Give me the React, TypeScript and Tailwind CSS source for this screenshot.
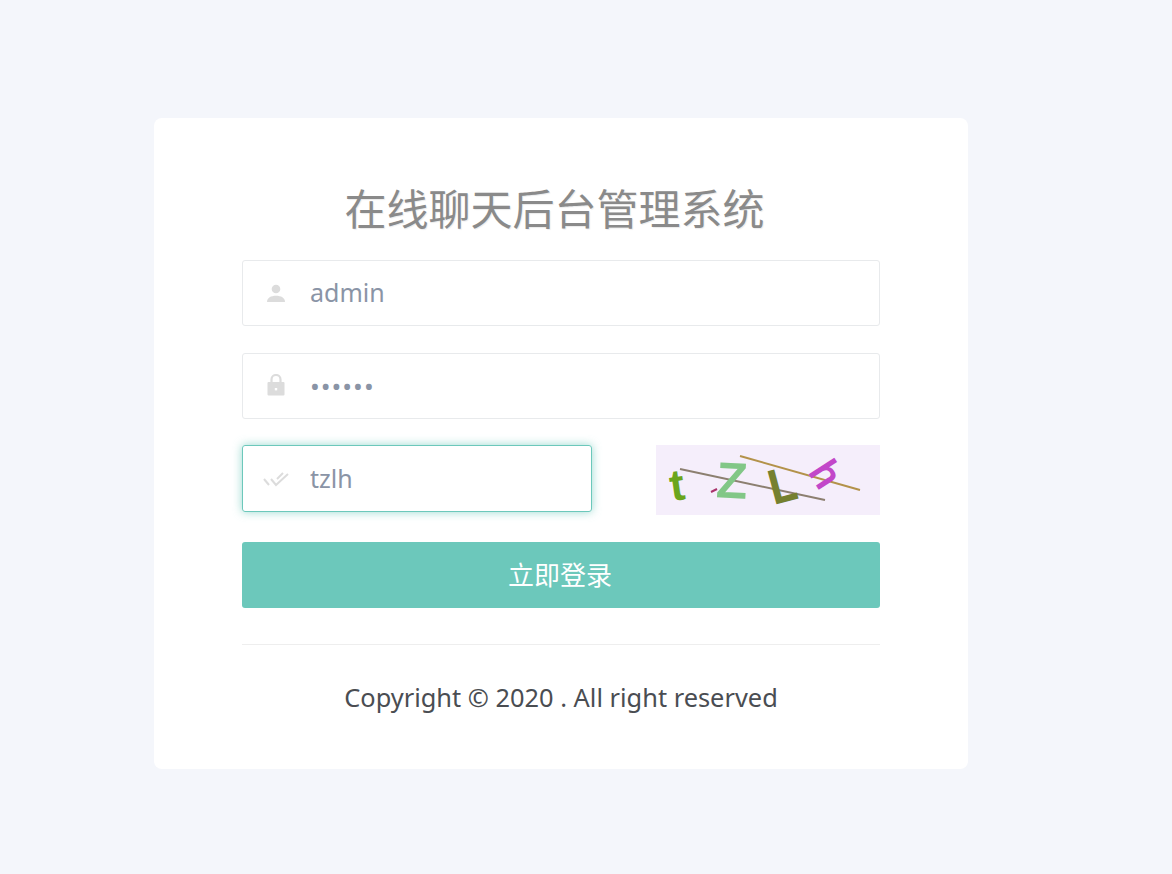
import { useState } from "react"

const fontStack = "font-['Noto_Sans','Noto_Sans_CJK_SC',sans-serif]"

const UserIcon = () => (
    <svg width="20" height="19" viewBox="0 0 20 19" fill="#dcdcdc">
        <circle cx="10" cy="5" r="4.300" />
        <path d="M1 18c0-4.200 4-6.200 9-6.200s9 2 9 6.200z" />
    </svg>
)

const LockIcon = () => (
    <svg width="18" height="22" viewBox="0 0 18 22">
        <path
            d="M4.500 9V5.500a4.500 4.500 0 0 1 9 0V9"
            fill="none"
            stroke="#dcdcdc"
            strokeWidth="2.200"
        />
        <rect x="0.500" y="8" width="17" height="13.500" rx="1" fill="#dcdcdc" />
        <rect x="7.800" y="14" width="2.400" height="2.400" fill="#fff" />
    </svg>
)

const CheckIcon = () => (
    <svg width="26" height="16" viewBox="0 0 26 16" fill="none" stroke="#dcdcdc" strokeWidth="2">
        <path d="M1 8l5 6" />
        <path d="M8 8l5 6L25 3" />
        <path d="M14 8l6-6" />
    </svg>
)

const Captcha = () => (
    <div className="w-[224px] h-[70px] bg-[#f5eefb]">
        <svg width="224" height="70" viewBox="0 0 224 70" fontFamily="'Liberation Sans', sans-serif" textAnchor="middle">
            <path d="M24 24L169 55" stroke="#8c7f70" strokeWidth="2" />
            <path d="M84 11L204 45" stroke="#b3924a" strokeWidth="2" />
            <path d="M55 47l6-3" stroke="#a8326a" strokeWidth="2" />
            <text x="0" y="14" fontSize="44" fontWeight="700" fill="#6aa51c" transform="translate(21 41) rotate(-8)">t</text>
            <text x="0" y="17" fontSize="48" fill="#82c787" stroke="#82c787" strokeWidth="2" transform="translate(76 35) rotate(3)">Z</text>
            <text x="0" y="16" fontSize="46" fill="#75802f" stroke="#75802f" strokeWidth="2.500" transform="translate(126 40) rotate(-15)">L</text>
            <text x="0" y="14" fontSize="40" fill="#c247c9" stroke="#c247c9" strokeWidth="1.500" transform="translate(170 29) rotate(57)">h</text>
        </svg>
    </div>
)

const App = () => {
    const [username, setUsername] = useState("admin")
    const [password, setPassword] = useState("123456")
    const [code, setCode] = useState("tzlh")

    return (
        <div className={`min-h-[874px] bg-[#f4f6fb] pt-[118px] ${fontStack}`}>
            <div className="ml-[154px] w-[814px] h-[651px] bg-white rounded-lg px-[88px] pt-[61px]">
                <h1 className="text-[42px] leading-[60px] text-[#8a8a8a] text-center pr-[13px] [text-shadow:1px_1px_1px_rgba(0,0,0,0.08)]">
                    在线聊天后台管理系统
                </h1>
                <div className="mt-[21px] flex items-center h-[66px] border border-[#e8eaec] rounded-[3px]">
                    <span className="w-[67px] pr-[2px] flex justify-center">
                        <UserIcon />
                    </span>
                    <input
                        value={username}
                        onChange={(e) => setUsername(e.target.value)}
                        className="flex-1 min-w-0 outline-none text-[25px] text-[#8a94a6]"
                    />
                </div>
                <div className="mt-[27px] flex items-center h-[66px] border border-[#e8eaec] rounded-[3px]">
                    <span className="w-[67px] pr-[2px] flex justify-center pb-[2px]">
                        <LockIcon />
                    </span>
                    <input
                        type="password"
                        value={password}
                        onChange={(e) => setPassword(e.target.value)}
                        className="flex-1 min-w-0 outline-none text-[26px] tracking-[1px] text-[#8a94a6]"
                    />
                </div>
                <div className="mt-[26px] flex justify-between items-start">
                    <div className="w-[350px] h-[67px] flex items-center border border-[#6cc8bb] rounded-[3px] shadow-[0_0_10px_rgba(108,200,187,0.7)]">
                        <span className="w-[67px] pr-[2px] flex justify-center">
                            <CheckIcon />
                        </span>
                        <input
                            value={code}
                            onChange={(e) => setCode(e.target.value)}
                            className="flex-1 min-w-0 outline-none text-[25px] text-[#8a94a6]"
                        />
                    </div>
                    <Captcha />
                </div>
                <button className="mt-[27px] block w-full h-[66px] bg-[#6cc8bb] rounded-[3px] text-white text-[26px] pr-[2px]">
                    立即登录
                </button>
                <div className="mt-[36px] border-t border-[#eeeeee]" />
                <p className="mt-[34px] text-center text-[25.400px] leading-[36px] text-[#4a4d52]">
                    Copyright © 2020 . All right reserved
                </p>
            </div>
        </div>
    )
}

export default App
